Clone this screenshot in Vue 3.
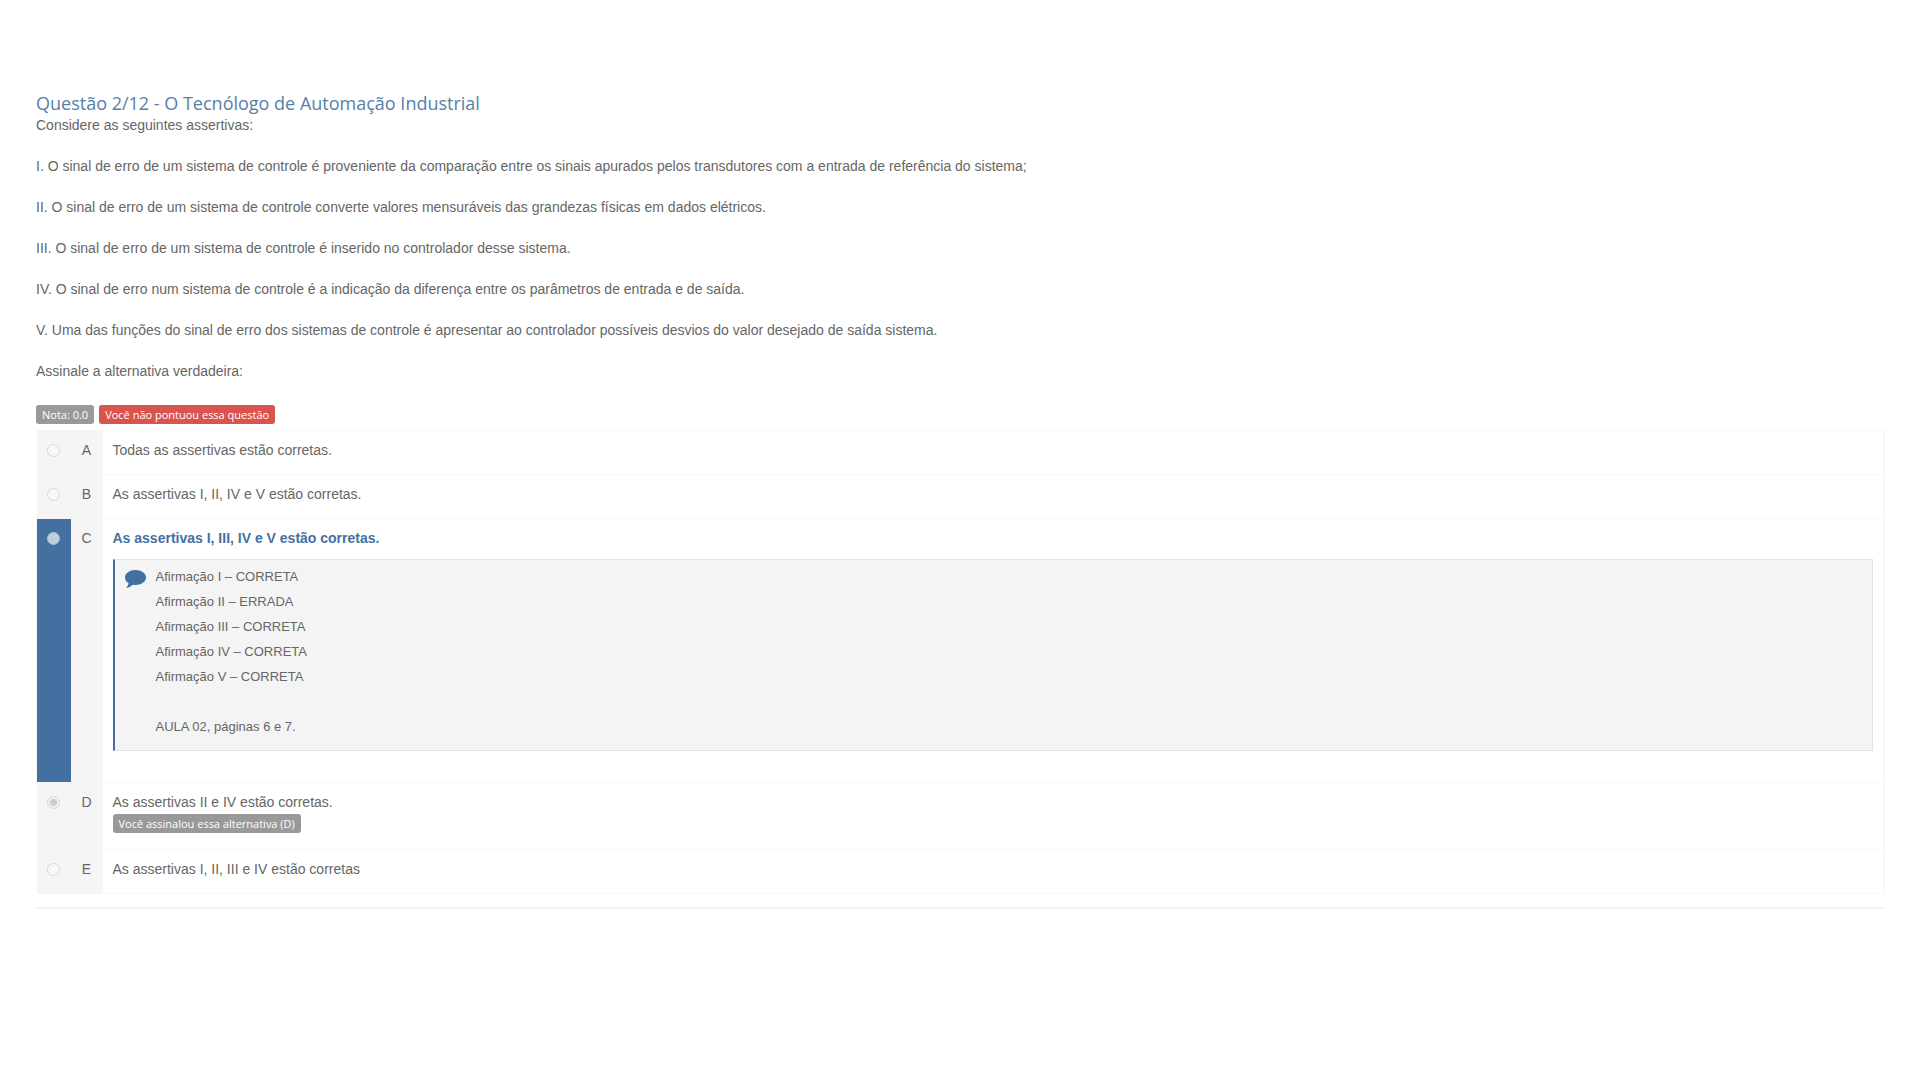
<script setup>
const statements = [
  'Considere as seguintes assertivas:',
  'I. O sinal de erro de um sistema de controle é proveniente da comparação entre os sinais apurados pelos transdutores com a entrada de referência do sistema;',
  'II. O sinal de erro de um sistema de controle converte valores mensuráveis das grandezas físicas em dados elétricos.',
  'III. O sinal de erro de um sistema de controle é inserido no controlador desse sistema.',
  'IV. O sinal de erro num sistema de controle é a indicação da diferença entre os parâmetros de entrada e de saída.',
  'V. Uma das funções do sinal de erro dos sistemas de controle é apresentar ao controlador possíveis desvios do valor desejado de saída sistema.',
  'Assinale a alternativa verdadeira:',
]

const options = [
  { letter: 'A', text: 'Todas as assertivas estão corretas.' },
  { letter: 'B', text: 'As assertivas I, II, IV e V estão corretas.' },
  {
    letter: 'C',
    text: 'As assertivas I, III, IV e V estão corretas.',
    correct: true,
    comment: [
      'Afirmação I – CORRETA',
      'Afirmação II – ERRADA',
      'Afirmação III – CORRETA',
      'Afirmação IV – CORRETA',
      'Afirmação V – CORRETA',
      '',
      'AULA 02, páginas 6 e 7.',
    ],
  },
  {
    letter: 'D',
    text: 'As assertivas II e IV estão corretas.',
    chosen: true,
    note: 'Você assinalou essa alternativa (D)',
  },
  { letter: 'E', text: 'As assertivas I, II, III e IV estão corretas' },
]
</script>

<template>
  <main class="question">
    <h1 class="title">Questão 2/12 - O Tecnólogo de Automação Industrial</h1>
    <div class="statement">
      <p v-for="line in statements" :key="line">{{ line }}</p>
    </div>
    <div class="badges">
      <span class="badge">Nota: 0.0</span>
      <span class="badge danger">Você não pontuou essa questão</span>
    </div>
    <table class="options">
      <tbody>
        <tr
          v-for="o in options"
          :key="o.letter"
          :class="{ correct: o.correct, chosen: o.chosen }"
        >
          <td class="pick">
            <input
              :id="'option-' + o.letter"
              type="radio"
              name="answer"
              :value="o.letter"
              :checked="o.chosen"
              disabled
            />
          </td>
          <td class="letter">{{ o.letter }}</td>
          <td class="answer">
            <label :for="'option-' + o.letter">{{ o.text }}</label>
            <div v-if="o.note" class="badge note">{{ o.note }}</div>
            <div v-if="o.comment" class="comment">
              <svg class="bubble" viewBox="0 0 21 18" aria-hidden="true">
                <path d="M10.500 0C16.300 0 21 3.300 21 7.500S16.300 15 10.500 15c-.9 0-1.800-.1-2.700-.3C6.200 16.300 4.200 17.400 1.900 17.800c-.4.100-.6-.4-.3-.7 1.100-1 1.800-2.300 2-3.800C1.400 11.900 0 9.900 0 7.500 0 3.300 4.700 0 10.500 0z" />
              </svg>
              <div class="comment-lines">
                <p v-for="(line, i) in o.comment" :key="i">{{ line }}</p>
              </div>
            </div>
          </td>
        </tr>
      </tbody>
    </table>
    <hr class="rule" />
  </main>
</template>

<style>
body {
  margin: 0;
  background: #fff;
}
</style>

<style scoped>
.question {
  padding: 92px 35px 0 36px;
  color: #666;
  font: 14px/21px 'Liberation Sans', Arial, sans-serif;
}
p {
  margin: 0;
}
.title {
  margin: 0;
  color: #5580a8;
  font: 400 18px/23px 'Open Sans', sans-serif;
}
.statement {
  display: flex;
  flex-direction: column;
  gap: 20px;
}
.badges {
  display: flex;
  gap: 5px;
  margin: 23px 0 6px;
}
.badge {
  padding: 0 6px;
  border-radius: 3px;
  background: #999;
  color: #fff;
  font: 11px/19px 'Open Sans', sans-serif;
}
.danger {
  background: #d9534f;
}
.note {
  width: fit-content;
  margin-top: 1px;
}
.options {
  width: 100%;
  border-collapse: collapse;
}
td {
  padding: 9px 10px 13px;
  vertical-align: top;
  border: 0 solid #f8f8f8;
  border-width: 1px 0;
}
.pick,
.letter {
  box-sizing: border-box;
  background: #f5f5f5;
  text-align: center;
  border-color: #f5f5f5;
}
.pick {
  width: 34px;
  padding: 13px 0 0;
}
.letter {
  width: 32px;
  padding-inline: 0;
}
.answer {
  border-right-width: 2px;
}
.answer label {
  display: block;
}
.pick input {
  appearance: none;
  display: block;
  box-sizing: border-box;
  width: 13px;
  height: 13px;
  margin: 0 auto;
  border: 1px solid #d8d8d8;
  border-radius: 50%;
  background: #f8f8f8;
}
.pick input:checked {
  background: radial-gradient(circle, #ccc 3px, #f0f0f0 4px);
}
.correct .pick {
  background: #4470a1;
  border-left: 1px solid #f5f5f5;
}
.correct .pick input {
  border-color: #a9bfd6;
  background: #c0cddb;
}
.correct label {
  color: #4470a1;
  font-weight: 700;
}
.correct .answer {
  padding-bottom: 31px;
}
.chosen .answer {
  padding-bottom: 16px;
}
.comment {
  display: flex;
  gap: 10px;
  margin-top: 10px;
  padding: 4px 10px 11px;
  border: 1px solid #e2e2e2;
  border-left: 2px solid #4470a1;
  background: #f4f4f4;
  font-size: 13px;
  line-height: 25px;
}
.comment-lines p {
  min-height: 25px;
}
.bubble {
  width: 21px;
  height: 18px;
  margin-top: 6px;
  fill: #4470a1;
}
.rule {
  margin: 13px 0 0;
  border: 0;
  border-top: 2px solid #f2f2f2;
}
</style>
